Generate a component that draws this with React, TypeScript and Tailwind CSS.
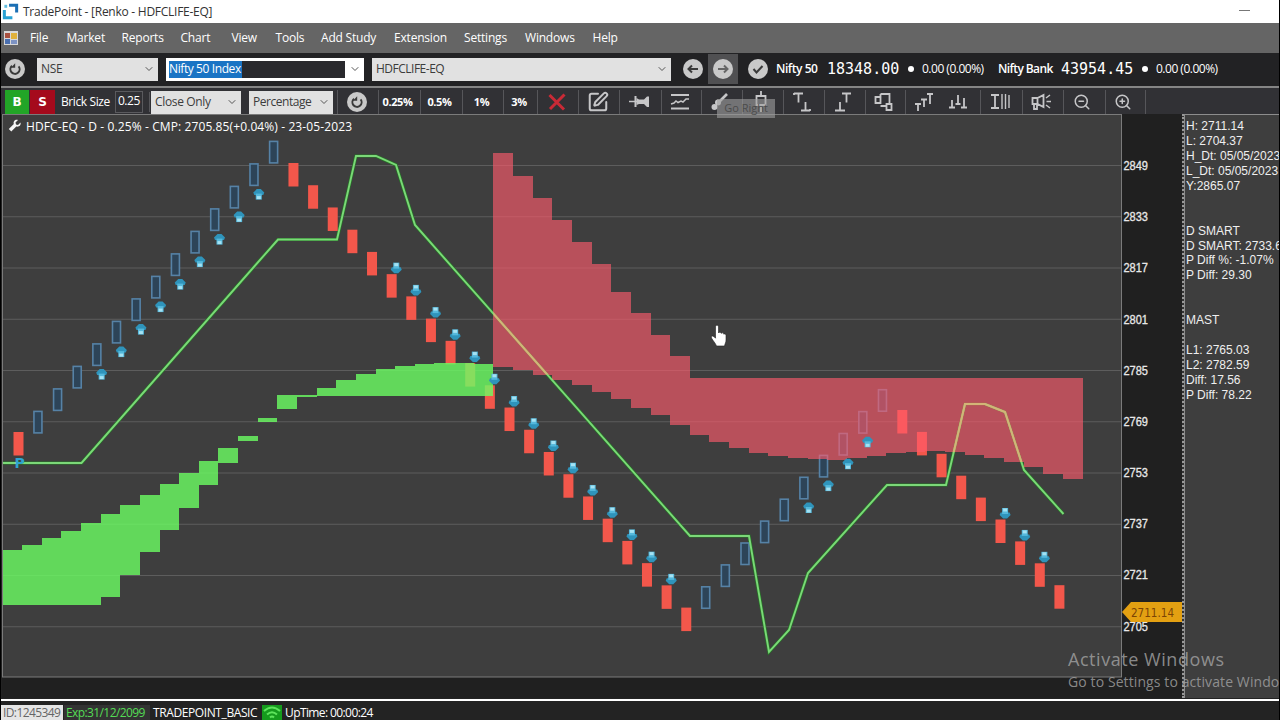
import type { ReactNode } from 'react';
import { ChevronDown, SquarePen, ZoomIn, ZoomOut } from 'lucide-react';

const STEP = 19.64;

const menu = [
  { label: 'File', className: 'w-[36.5px]' },
  { label: 'Market', className: 'w-[55px]' },
  { label: 'Reports', className: 'w-[59px]' },
  { label: 'Chart', className: 'w-[51px]' },
  { label: 'View', className: 'w-[44px]' },
  { label: 'Tools', className: 'w-[45.5px]' },
  { label: 'Add Study', className: 'w-[73px]' },
  { label: 'Extension', className: 'w-[70px]' },
  { label: 'Settings', className: 'w-[61px]' },
  { label: 'Windows', className: 'w-[67.5px]' },
  { label: 'Help', className: 'w-[40px]' },
];

const prices = [2849, 2833, 2817, 2801, 2785, 2769, 2753, 2737, 2721, 2705];

const stats = [
  'H: 2711.14', 'L: 2704.37', 'H_Dt: 05/05/2023', 'L_Dt: 05/05/2023', 'Y:2865.07', '', '',
  'D SMART', 'D SMART: 2733.65', 'P Diff %: -1.07%', 'P Diff: 29.30', '', '',
  'MAST', '', 'L1: 2765.03', 'L2: 2782.59', 'Diff: 17.56', 'P Diff: 78.22',
];

// [top, bottom] of every brick column
const greenBand = [
  [549.5, 604.7], [544.7, 604.7], [538, 604.7], [530.8, 604.7], [522.8, 604.7], [513.8, 597], [504.8, 575],
  [495, 552], [484, 530], [473, 508], [461, 485.3], [447.8, 463.3], [436, 440.5], [417.8, 422.4], [394.8, 408.7],
  [395.2, 397.3], [388, 395.7], [380, 395.7], [374, 395.7], [369.3, 395.7], [366, 395.7], [364.3, 395.7],
  [363.4, 395.7], [363.4, 395.7], [363.8, 395.7],
];

const redTops = [153, 175.8, 197.8, 220, 242, 264, 291.7, 313.4, 334.7, 356];
const redBottoms = [
  366.7, 369.7, 374.6, 379.7, 384.7, 391.7, 398.7, 407.7, 415.3, 425.3, 435.3, 442, 448.3, 453.3, 456.3,
  458.3, 459.2, 459.5, 458, 456, 453, 451.5, 451, 452.3, 455.3, 458.3, 462, 467.3, 473.7, 479,
];
const redBand = redBottoms.map((bottom, i) => [redTops[i] ?? 378, bottom]);

const trend =
  '3,463 81.5,463 278,239.5 337,239.5 356,156 376,156 396,165 415,225 690,536 749,536 769,652 789,630 808,573 887,485 946,485 965,404 985,404 1005,412 1024,470 1063.5,514';

type Brick = { x: number; y: number; up: boolean };

const bricks: Brick[] = Array.from({ length: 54 }, (_, i) => {
  const x = 18.5 + STEP * i;
  if (i === 0) return { x, y: 432, up: false };
  if (i <= 13) return { x, y: 410.6 - (i - 1) * 22.5, up: true };
  if (i <= 34) return { x, y: 163 + (i - 14) * 22.23, up: false };
  if (i <= 44) return { x, y: 586 - (i - 35) * 21.9, up: true };
  return { x, y: 410 + (i - 45) * 21.9, up: false };
});

const hasArrow = (i: number) => (i >= 4 && i <= 12) || (i >= 19 && i <= 33) || (i >= 40 && i <= 43) || (i >= 50 && i <= 52);

function bandPath(band: number[][], start: number) {
  const x = (k: number) => (k === 0 ? 3 : 2.4 + STEP * k);
  return band
    .map(([top, bottom], i) => `M${x(start + i)} ${top}H${x(start + i + 1)}V${bottom}H${x(start + i)}Z`)
    .join('');
}

function Select({ label, className }: { label: string; className: string }) {
  return (
    <div className={`flex items-center justify-between bg-[#e1e1e1] pl-[4px] pr-[3px] text-[#3c3c3c] ${className}`}>
      <span>{label}</span>
      <ChevronDown className="size-[12px] shrink-0 text-[#555]" strokeWidth={2} />
    </div>
  );
}

function Round({ children }: { children: ReactNode }) {
  return (
    <svg viewBox="0 0 20 20" className="size-[20px] shrink-0" fill="none" stroke="#3a3a3a" strokeWidth="2">
      <circle cx="10" cy="10" r="10" fill="#c9c9c9" stroke="none" />
      {children}
    </svg>
  );
}

function Reload() {
  return (
    <Round>
      <path d="M7 6.8a4.6 4.6 0 1 0 6.6 .6" />
      <path d="M10.2 4.2v4.5H5.8z" fill="#3a3a3a" stroke="none" />
    </Round>
  );
}

function Cell({ className, children }: { className: string; children?: ReactNode }) {
  return (
    <div className={`relative flex h-[24px] shrink-0 items-center justify-center border-r border-[#56565a] ${className}`}>
      {children}
    </div>
  );
}

function Glyph({ children }: { children: ReactNode }) {
  return (
    <svg viewBox="0 0 22 22" className="size-[22px]" fill="none" stroke="#c6c6c8" strokeWidth="1.8">
      {children}
    </svg>
  );
}

function Toolbar() {
  return (
    <div className="flex h-[26px] items-center bg-[#313135] pl-[4px] pt-[2px] text-[12px] text-white">
      <div className="flex h-[24px] w-[24px] items-center justify-center bg-[#22a527] font-['DejaVu_Sans'] text-[12px] font-bold">B</div>
      <div className="ml-[1px] flex h-[24px] w-[25px] items-center justify-center bg-[#a50a1c] font-['DejaVu_Sans'] text-[12px] font-bold">S</div>
      <div className="w-[60px] pl-[6px] text-[12px] tracking-[-0.4px]">Brick Size</div>
      <div className="h-[22px] w-[28px] border border-[#5a5a5e] pl-[2px] text-[12px] leading-[17px] tracking-[-0.5px]">0.25</div>
      <div className="h-[20px] w-[7px] border-r border-[#56565a]" />
      <Select label="Close Only" className="ml-[1px] h-[23px] w-[90px] text-[12px] tracking-[-0.35px]" />
      <Select label="Percentage" className="ml-[8px] h-[23px] w-[84px] text-[12px] tracking-[-0.45px]" />
      <Cell className="w-[5px]" />
      <Cell className="w-[41px] pr-[3px]"><Reload /></Cell>
      <Cell className="w-[42px] pr-[4px] text-[11px] font-bold tracking-[-0.4px]">0.25%</Cell>
      <Cell className="w-[42px] pr-[4px] text-[11px] font-bold tracking-[-0.4px]">0.5%</Cell>
      <Cell className="w-[41px] pr-[3px] text-[11px] font-bold tracking-[-0.4px]">1%</Cell>
      <Cell className="w-[34px] pr-[3px] text-[11px] font-bold tracking-[-0.4px]">3%</Cell>
      <Cell className="w-[41px] pr-[2px]">
        <svg viewBox="0 0 22 22" className="size-[22px]" stroke="#c92a36" strokeWidth="3">
          <path d="M3.5 4 18 18.5M18.5 3.5 4 18" />
        </svg>
      </Cell>
      <Cell className="w-[41px] pr-[2px]"><SquarePen className="size-[22px] text-[#c6c6c8]" strokeWidth={2.2} /></Cell>
      <Cell className="w-[42px] pr-[2px]">
        <Glyph>
          <path d="M0 10.5h8" strokeWidth="1.5" />
          <path d="M6.5 5v11" strokeWidth="2" />
          <path d="M7.5 7 10 8.5h5l3-3h2v10.5h-2l-3-3h-5L7.5 14z" fill="#c6c6c8" stroke="none" />
        </Glyph>
      </Cell>
      <Cell className="w-[40px] pr-[4px]">
        <Glyph>
          <path d="M2 4h18M2 17.5h18" />
          <path d="m2 13 3-1 2-2 2 1.5 3-1.5 2 1 3-3h3" strokeWidth="1.5" />
        </Glyph>
      </Cell>
      <Cell className="w-[41px] pr-[4px]">
        <Glyph>
          <path d="m18 3-9 9" strokeWidth="2.6" />
          <circle cx="9" cy="11.5" r="3" fill="#c6c6c8" stroke="none" />
          <circle cx="5.5" cy="16" r="3" fill="#c6c6c8" stroke="none" />
        </Glyph>
        <span className="absolute left-[15px] top-[9px] z-10 flex h-[19px] w-[58px] items-center justify-center bg-[#a0a0a0]/60 text-[11px] text-[#4c4c4c]">
          Go Right
        </span>
      </Cell>
      <Cell className="w-[41px] pr-[4px]"><Glyph><path d="M6.5 5h9v9h-9zM11 0v5M11 14v7" /></Glyph></Cell>
      <Cell className="w-[41px] pr-[4px]"><Glyph><path d="M3 2.5h9M7.5 2.500v9M10 19.5h9M14.5 11v8.5M3 2v2M19 18v2" /></Glyph></Cell>
      <Cell className="w-[41px] pr-[4px]"><Glyph><path d="M10 2.5h9M14.5 2.5v9M3 19.5h10M8 11v8.5" /></Glyph></Cell>
      <Cell className="w-[40px] pr-[3px]"><Glyph><path d="M2.500 6h5v6h-5zM13.5 13h5v6h-5zM7.5 3h9v10M7.5 3v5M7.500 15h6" /></Glyph></Cell>
      <Cell className="w-[75px] gap-[12px] pr-[4px]">
        <Glyph><path d="M2 13h6M5 13v7M8 8.5h6M11 8.5V16M14 3h6M17 3v10" /></Glyph>
        <Glyph><path d="M2 16.5h6M5 9v7.5M8.5 13h5M11 4v9M14 16.5h6M17 7v9.5" /></Glyph>
      </Cell>
      <Cell className="w-[42px] pr-[4px]">
        <Glyph><path d="M2 4h8M6 4v13M2 17h8" /><path d="M13 3v15M16.5 3v15M20 4v13" strokeWidth="1.4" /></Glyph>
      </Cell>
      <Cell className="w-[41px] pr-[4px]">
        <Glyph>
          <path d="M13.5 4v12l-6-3H2.5V7h5zM4 13v5h3v-4.5M7.5 7v6" />
          <path d="m16 7 4-3M16.5 10.5H21M16 14l4 3" strokeWidth="1.5" />
        </Glyph>
      </Cell>
      <Cell className="w-[42px] pr-[5px]"><ZoomOut className="size-[18px] text-[#c6c6c8]" strokeWidth={2} /></Cell>
      <Cell className="w-[40px] pr-[5px]"><ZoomIn className="size-[18px] text-[#c6c6c8]" strokeWidth={2} /></Cell>
    </div>
  );
}

function Arrow({ x, y, up }: Brick) {
  return (
    <g transform={`translate(${x} ${y}) scale(1 ${up ? 1 : -1})`}>
      <path d="M-2-5H2L5.5-1.5 4.5 1H-4.5L-5.5-1.5Z" fill="#2f94bb" />
      <path d="M-3-.5H3V5.500H-3Z" fill="#55b9dc" />
      <path d="M-2 2H2V5H-2Z" fill="#a5e2f3" />
    </g>
  );
}

function Chart() {
  return (
    <svg viewBox="2 114 1180 584" className="h-[584px] w-[1180px] shrink-0">
      <defs>
        <clipPath id="red-zone"><path d={bandPath(redBand, 25)} /></clipPath>
      </defs>
      <rect x="2" y="114" width="1180" height="584" fill="#202020" />
      <rect x="2.5" y="114.5" width="1119" height="562.5" fill="#3e3e3e" stroke="#7b7b7b" />
      {prices.map((price, i) => (
        <path key={price} d={`M3 ${165.5 + i * 51.25}H1121`} stroke="#5d5d5d" />
      ))}
      <polyline points={trend} fill="none" stroke="#267a26" strokeWidth="3.2" />
      {bricks.map(({ x, y, up }, i) =>
        up ? (
          <rect key={i} x={x - 4.2} y={y + 0.8} width="8" height="21.5" fill="#2d4458" stroke="#5682a6" strokeWidth="1.6" />
        ) : (
          <rect key={i} x={x - 5} y={y} width="10" height="23.5" fill="#f3574b" />
        ),
      )}
      <path d={bandPath(greenBand, 0)} fill="#6cff63" fillOpacity=".8" shapeRendering="crispEdges" />
      <path d={bandPath(redBand, 25)} fill="#ff5a6c" fillOpacity=".63" shapeRendering="crispEdges" />
      <polyline points={trend} fill="none" stroke="#7bd878" strokeWidth="1.9" />
      <polyline points={trend} fill="none" stroke="#d3b477" strokeWidth="2" clipPath="url(#red-zone)" />
      {bricks.map(({ x, y, up }, i) => hasArrow(i) && <Arrow key={i} x={x + 4.6} y={up ? y + 31 : y - 6} up={up} />)}
      <text x="14.500" y="468" fill="#2fa4d0" fontFamily="DejaVu Sans" fontSize="14" fontWeight="bold">P</text>

      <path
        d="m20 121-2.5 2.5-2-.5-.5-2 2.5-2.5c-3-.8-5 1.5-4.2 4l-5 5 2.5 2.5 5-5c2.7.8 5-1.5 4.2-4"
        transform="translate(.5 1.5)"
        fill="#f5f5f5"
      />
      <text x="26" y="130.500" fill="#fff" fontFamily="Open Sans" fontSize="12" textLength="326">
        HDFC-EQ - D - 0.25% - CMP: 2705.85(+0.04%) - 23-05-2023
      </text>

      <g fill="#e8e8e8" stroke="#e8e8e8" strokeWidth=".3" fontFamily="Liberation Sans" fontSize="12">
        {prices.map((price, i) => (
          <text key={price} x="1123.5" y={170 + i * 51.17} textLength="24.5" lengthAdjust="spacingAndGlyphs">{price}</text>
        ))}
      </g>
      <path d="m1122 612 9-10h51v20h-51z" fill="#e3a012" />
      <text x="1131" y="616.5" fill="#7b4405" fontFamily="DejaVu Sans" fontSize="12" textLength="43" lengthAdjust="spacingAndGlyphs">2711.14</text>

      <path
        d="M716.500 327c0-2.300 3-2.300 3 0v6c.5-1.300 2.500-1 2.700.4.700-1 2.500-.6 2.600.8.900-.7 2.200 0 2.200 1.400v4.400c0 2.500-1 3.500-1.500 6h-8c-1-3-3.500-5-5-8-.8-1.800 1-2.800 2.500-1.300l1.500 1.500z"
        transform="translate(-1 0)"
        fill="#fff"
        stroke="#222"
        strokeWidth=".6"
      />
    </svg>
  );
}

export default function App() {
  return (
    <div className="relative flex h-[720px] w-[1280px] flex-col overflow-hidden whitespace-nowrap border-x border-black bg-[#232323] font-['Open_Sans',sans-serif]">
      <header className="flex h-[23px] shrink-0 items-center justify-between bg-white text-[#333]">
        <div className="flex items-center">
          <svg viewBox="0 0 18 18" className="ml-px size-[17px]" fill="none" strokeWidth="3.2">
            <path d="M7.5 2.5h8V10" stroke="#1b6fb4" />
            <path d="M2.5 7.5v8H11" stroke="#28a2d4" />
            <path d="M2.500 3.500h3" stroke="#63bfe0" />
          </svg>
          <span className="ml-[4px] text-[12px] tracking-[-0.26px]">TradePoint - [Renko - HDFCLIFE-EQ]</span>
        </div>
        <div className="mr-[29px] mt-[-2px] h-px w-[11px] bg-[#777]" />
      </header>

      <nav className="flex h-[30px] shrink-0 items-center bg-[#656565] text-[12px] tracking-[-0.2px] text-white">
        <svg viewBox="0 0 14 14" className="ml-[3px] mr-[12px] size-[14px]">
          <path d="M0 0h14v14H0z" fill="#d8d8d8" />
          <path d="M1 2h5v5H1z" fill="#a8503f" />
          <path d="M7 2h6v6H7z" fill="#e0b13a" />
          <path d="M1 8h5v5H1z" fill="#4a6fb0" />
          <path d="M7 9h6v4H7z" fill="#7d93c4" />
        </svg>
        {menu.map(({ label, className }) => (
          <div key={label} className={`shrink-0 ${className}`}>{label}</div>
        ))}
      </nav>

      <div className="flex h-[33px] shrink-0 items-center bg-[#222224] pb-px pl-[4px] text-[12px] tracking-[-0.3px] text-white">
        <Reload />
        <Select label="NSE" className="ml-[12px] h-[23px] w-[121px]" />
        <div className="ml-[8px] flex h-[23px] w-[198px] items-center bg-white pl-[3px]">
          <div className="flex h-[17px] w-[176px] items-center bg-[#29292d]">
            <span className="flex h-[17px] w-[73px] items-center bg-[#1a74c4] tracking-[-0.4px]">Nifty 50 Index</span>
          </div>
          <ChevronDown className="ml-[4px] size-[12px] text-[#555]" />
        </div>
        <Select label="HDFCLIFE-EQ" className="ml-[8px] h-[23px] w-[299px] tracking-[-0.5px]" />
        <div className="ml-[12px] flex"><Round><path d="M15 10H6M9 6.5 5.5 10 9 13.5" /></Round></div>
        <div className="ml-[5px] flex h-[30px] w-[30px] items-center justify-center bg-[#505052]">
          <Round><path d="M5 10h9M11 6.5l3.5 3.5-3.5 3.5" stroke="#666" /></Round>
        </div>
        <div className="ml-[10px] flex"><Round><path d="m5.5 10 3 3.5L14.5 7" /></Round></div>
        <div className="ml-[8px] w-[51px] font-semibold tracking-[-0.45px]">Nifty 50</div>
        <div className="w-[81px] font-['DejaVu_Sans_Mono'] text-[15px] tracking-normal">18348.00</div>
        <div className="size-[6px] rounded-full bg-white" />
        <div className="ml-[8px] w-[76px] tracking-[-0.5px]">0.00 (0.00%)</div>
        <div className="w-[63px] font-semibold tracking-[-0.6px]">Nifty Bank</div>
        <div className="w-[81px] font-['DejaVu_Sans_Mono'] text-[15px] tracking-normal">43954.45</div>
        <div className="size-[6px] rounded-full bg-white" />
        <div className="ml-[8px] tracking-[-0.5px]">0.00 (0.00%)</div>
      </div>

      <div className="h-[2px] shrink-0 bg-[#858585]" />
      <Toolbar />

      <main className="flex h-[584px] shrink-0 pl-px">
        <Chart />
        <div className="w-[2px] shrink-0 border-l-2 border-dotted border-[#989898] bg-[#333]" />
        <aside className="min-w-0 grow overflow-hidden border-l border-t border-[#8d8d8d] bg-[#3e3e3e] pl-px pt-[4px] font-['Liberation_Sans'] text-[12px] leading-[14.95px] text-[#efefef]">
          {stats.map((line, i) => (
            <div key={i} className="h-[14.95px]">{line}</div>
          ))}
        </aside>
      </main>

      <div className="h-[3px] shrink-0 border-b-2 border-white" />
      <footer className="flex h-[19px] shrink-0 items-center pt-[4px] text-[12px] tracking-[-0.6px] text-white">
        <div className="flex h-[16px] w-[62px] items-center bg-[#e5e5e5] pl-[2px] text-[#666]">ID:1245349</div>
        <div className="ml-px flex h-[16px] w-[86px] items-center bg-[#333] pl-[2px] text-[#55dd55]">Exp:31/12/2099</div>
        <div className="ml-[3px] w-[109px] tracking-[-0.4px]">TRADEPOINT_BASIC</div>
        <svg viewBox="0 0 20 16" className="h-[16px] w-[20px]" fill="none" stroke="#5de45c" strokeWidth="2">
          <path d="M0 0h20v16H0z" fill="#159b1d" stroke="none" />
          <path d="M2 6q8-7 16 0M5 9.5q5-4.5 10 0M8 12.5q2-2 4 0" />
        </svg>
        <div className="ml-[3px]">UpTime: 00:00:24</div>
      </footer>

      <div className="absolute left-[1067px] top-[646px] text-[#a5a5a5]/80">
        <div className="text-[18px] leading-[26px] tracking-[0.55px]">Activate Windows</div>
        <div className="text-[14px] leading-[19px] tracking-[0.1px]">Go to Settings to activate Windows.</div>
      </div>
    </div>
  );
}
